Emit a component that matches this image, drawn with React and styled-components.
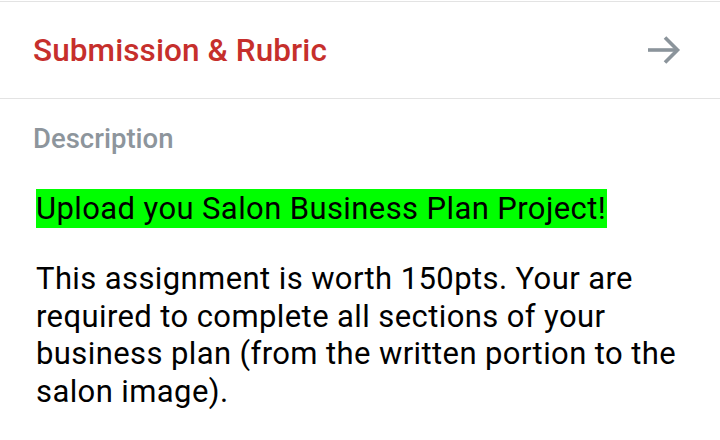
import React from 'react';
import styled, { createGlobalStyle } from 'styled-components';

const Global = createGlobalStyle`
  html, body {
    margin: 0;
    padding: 0;
    background: #ffffff;
  }
  body {
    font-family: Roboto, "Noto Sans", sans-serif;
  }
`;

const Page = styled.div`
  width: 720px;
  height: 440px;
  overflow: hidden;
  background: #ffffff;
`;

const HeaderRow = styled.div`
  margin-top: 1px;
  height: 96px;
  border-top: 1px solid #e3e3e3;
  border-bottom: 1px solid #e3e3e3;
  display: flex;
  align-items: center;
  justify-content: space-between;
  padding: 0 39px 0 33px;
`;

const Title = styled.div`
  color: #c62f2c;
  font-size: 31.5px;
  font-weight: 500;
  letter-spacing: 0.1px;
`;

const ArrowIcon = styled.svg.attrs(() => ({ viewBox: '0 0 34 34', xmlns: 'http://www.w3.org/2000/svg' }))`
  width: 34px;
  height: 34px;
  fill: none;
  stroke: #8b949b;
  stroke-width: 3.6;
  stroke-linecap: butt;
`;

const Body = styled.div`
  padding: 24px 33px 0 33px;
`;

const Label = styled.div`
  color: #8d959c;
  font-size: 27.5px;
  font-weight: 500;
  line-height: 32px;
`;

const Highlight = styled.div`
  margin-top: 34px;
  margin-left: 3px;
`;

const Marked = styled.span`
  display: inline-block;
  background: #00ff00;
  color: #000;
  font-size: 31px;
  letter-spacing: 0.4px;
  line-height: 39px;
  padding-right: 1px;
`;

const Paragraph = styled.p`
  margin: 32px 0 0 3px;
  color: #000;
  font-size: 31px;
  letter-spacing: 0.4px;
  line-height: 37.5px;
`;

export default function App() {
  return (
    <Page>
      <Global />
      <HeaderRow>
        <Title>Submission &amp; Rubric</Title>
        <ArrowIcon>
          <path d="M1 17h29" />
          <path d="M18 4.5l12.5 12.5L18 29.5" />
        </ArrowIcon>
      </HeaderRow>
      <Body>
        <Label>Description</Label>
        <Highlight>
          <Marked>Upload you Salon Business Plan Project!</Marked>
        </Highlight>
        <Paragraph>
          This assignment is worth 150pts. Your are required to complete all sections of your business plan (from the written portion to the salon image).
        </Paragraph>
      </Body>
    </Page>
  );
}
